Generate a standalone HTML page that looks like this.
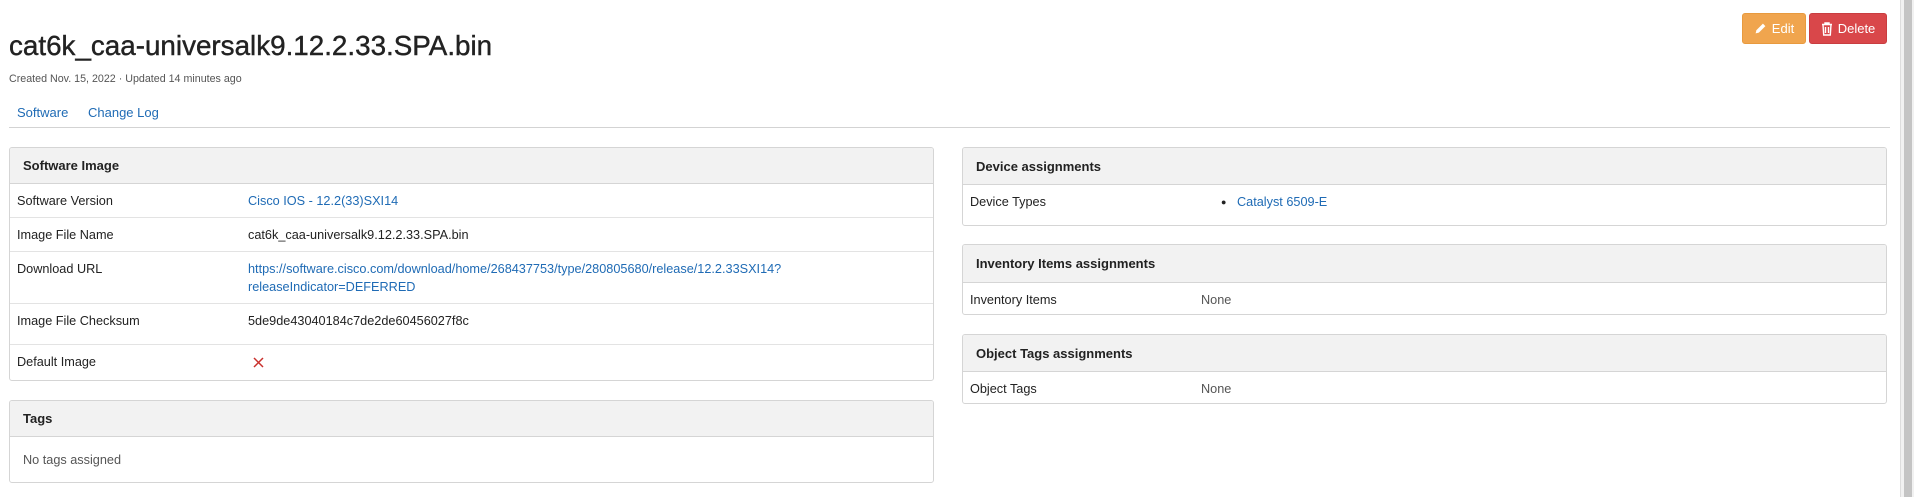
<!DOCTYPE html>
<html><head><meta charset="utf-8"><style>
*{box-sizing:border-box;margin:0;padding:0}
body{width:1914px;height:497px;background:#fff;font-family:"Liberation Sans",Arial,sans-serif;color:#222;position:relative;overflow:hidden;font-size:13px}
.a{position:absolute}
a{color:#1f6bb5;text-decoration:none}
.panel{position:absolute;border:1px solid #d5d5d5;border-radius:3px;background:#fff;overflow:hidden}
.hd{background:#f2f2f2;border-bottom:1px solid #d5d5d5;font-weight:bold;font-size:13px;padding-left:13px;display:flex;align-items:center}
.row{border-bottom:1px solid #e3e3e3;position:relative;font-size:12.7px;line-height:18px}
.row:last-child{border-bottom:none}
.row .l{position:absolute;left:7px;top:8px}
.row .v{position:absolute;top:8px}
.btn{position:absolute;color:#fff;border-radius:3px;font-size:13px;display:flex;align-items:center;justify-content:center;gap:5px}
</style></head><body>
<div class="a" style="left:9px;top:30px;font-size:27.8px;color:#222;-webkit-text-stroke:0.4px #222">cat6k_caa-universalk9.12.2.33.SPA.bin</div>
<div class="a" style="left:9px;top:73px;font-size:10.7px;color:#555">Created Nov. 15, 2022 · Updated 14 minutes ago</div>
<a class="a" style="left:17px;top:105px;font-size:13px">Software</a>
<a class="a" style="left:88px;top:105px;font-size:13px">Change Log</a>
<div class="a" style="left:9px;top:127px;width:1881px;height:1px;background:#d3d3d3"></div>

<div class="btn" style="left:1742px;top:13px;width:64px;height:31px;background:#f0a54e;border:1px solid #e89a3e">
<svg width="13" height="13" viewBox="0 0 16 16"><path d="M2 14l1-4 8-8 3 3-8 8z" fill="#fff"/></svg>Edit</div>
<div class="btn" style="left:1809px;top:13px;width:78px;height:31px;background:#d9474a;border:1px solid #c93d40">
<svg width="12" height="14" viewBox="0 0 12 14"><path d="M1 2.5h10M4 2.5V1h4v1.5M2 2.5l.7 10.5h6.6L10 2.5M4.5 5v6M7.5 5v6" stroke="#fff" stroke-width="1.4" fill="none"/></svg>Delete</div>

<div class="a" style="left:1900px;top:0;width:14px;height:497px;background:#f1f1f1;border-left:1px solid #ddd"></div>
<div class="a" style="left:1904px;top:0;width:8px;height:497px;background:#c4c4c4"></div>

<div class="panel" style="left:9px;top:147px;width:925px;height:234px">
<div class="hd" style="height:36px">Software Image</div>
<div class="row" style="height:34px"><span class="l">Software Version</span><a class="v" style="left:238px">Cisco IOS - 12.2(33)SXI14</a></div>
<div class="row" style="height:34px"><span class="l">Image File Name</span><span class="v" style="left:238px">cat6k_caa-universalk9.12.2.33.SPA.bin</span></div>
<div class="row" style="height:52px"><span class="l">Download URL</span><a class="v" style="left:238px">https://software.cisco.com/download/home/268437753/type/280805680/release/12.2.33SXI14?<br>releaseIndicator=DEFERRED</a></div>
<div class="row" style="height:41px"><span class="l">Image File Checksum</span><span class="v" style="left:238px">5de9de43040184c7de2de60456027f8c</span></div>
<div class="row" style="height:37px"><span class="l">Default Image</span><svg class="v" style="left:243px;top:12px" width="11" height="11" viewBox="0 0 11 11"><path d="M1 1l9 9M10 1l-9 9" stroke="#c9302c" stroke-width="1.5"/></svg></div>
</div>

<div class="panel" style="left:9px;top:400px;width:925px;height:83px">
<div class="hd" style="height:36px">Tags</div>
<div class="row" style="height:46px"><span class="l" style="left:13px;top:14px;color:#555">No tags assigned</span></div>
</div>

<div class="panel" style="left:962px;top:147px;width:925px;height:79px">
<div class="hd" style="height:37px">Device assignments</div>
<div class="row" style="height:41px"><span class="l">Device Types</span><span class="v" style="left:258px;font-size:9px">●</span><a class="v" style="left:274px">Catalyst 6509-E</a></div>
</div>

<div class="panel" style="left:962px;top:244px;width:925px;height:71px">
<div class="hd" style="height:38px">Inventory Items assignments</div>
<div class="row" style="height:32px"><span class="l">Inventory Items</span><span class="v" style="left:238px;color:#555">None</span></div>
</div>

<div class="panel" style="left:962px;top:334px;width:925px;height:70px">
<div class="hd" style="height:37px">Object Tags assignments</div>
<div class="row" style="height:32px"><span class="l">Object Tags</span><span class="v" style="left:238px;color:#555">None</span></div>
</div>
</body></html>
